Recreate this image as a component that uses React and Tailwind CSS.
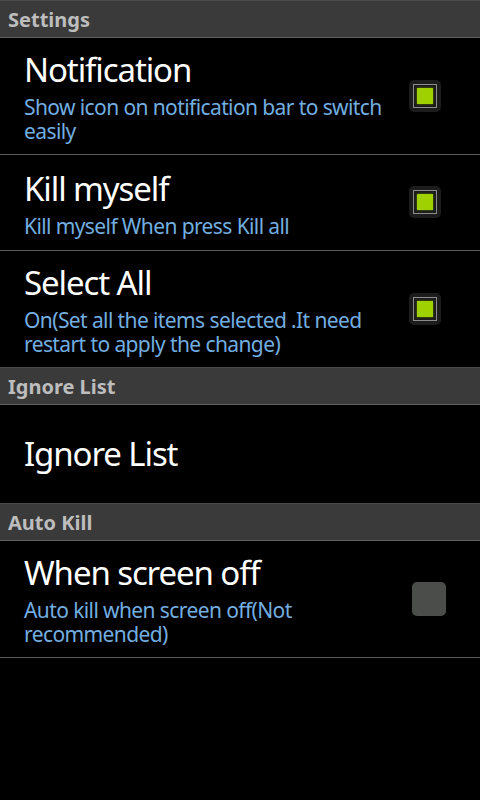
import React from "react";

const font = { fontFamily: '"Noto Sans", "DejaVu Sans", sans-serif' };

function CategoryHeader({ title }) {
  return (
    <div className="h-[38px] border-t border-t-[#4a4a4a] border-b border-b-[#5e5e5e] bg-[#3a3a3a] pl-2 flex items-center">
      <span className="text-[20px] font-bold leading-none text-[#bdbdbd] pt-[1px]">{title}</span>
    </div>
  );
}

function CheckBox({ checked }) {
  if (!checked) {
    return (
      <div className="mr-[34px] ml-[12px] w-[34px] h-[34px] rounded-[5px] bg-[#4b4d4b]" />
    );
  }
  return (
    <div className="mr-[39px] ml-[9px] w-[32px] h-[32px] rounded-[5px] bg-[#1c1c1c] flex items-center justify-center">
      <div className="w-[24px] h-[24px] border border-[#8c8c8c] flex items-center justify-center">
        <div className="w-[16px] h-[16px] bg-[#9fd000] shadow-[0_0_2px_#5f7a00]" />
      </div>
    </div>
  );
}

function PrefRow({ title, summary, checked, divider = true, height = "min-h-[96px]" }) {
  return (
    <div className={`${height} flex items-center pl-6 pt-[10px] pb-[11px] ${divider ? "border-b border-[#5a5a5a]" : ""}`}>
      <div className="w-[376px] flex flex-col">
        <span className="text-[33px] leading-[44px] tracking-[-1.1px] text-white">{title}</span>
        {summary && (
          <span className="mt-[3px] text-[21px] leading-[24px] tracking-[-0.6px] text-[#72aee0]">{summary}</span>
        )}
      </div>
      {checked !== undefined && <CheckBox checked={checked} />}
    </div>
  );
}

export default function App() {
  return (
    <div className="min-h-screen w-[480px] bg-black" style={font}>
      <CategoryHeader title="Settings" />
      <PrefRow
        title="Notification"
        summary="Show icon on notification bar to switch easily"
        checked={true}
      />
      <PrefRow title="Kill myself" summary="Kill myself When press Kill all" checked={true} />
      <PrefRow
        title="Select All"
        summary="On(Set all the items selected .It need restart to apply the change)"
        checked={true}
        divider={false}
      />
      <CategoryHeader title="Ignore List" />
      <PrefRow title="Ignore List" divider={false} height="h-[98px]" />
      <CategoryHeader title="Auto Kill" />
      <PrefRow
        title="When screen off"
        summary="Auto kill when screen off(Not recommended)"
        checked={false}
      />
    </div>
  );
}
